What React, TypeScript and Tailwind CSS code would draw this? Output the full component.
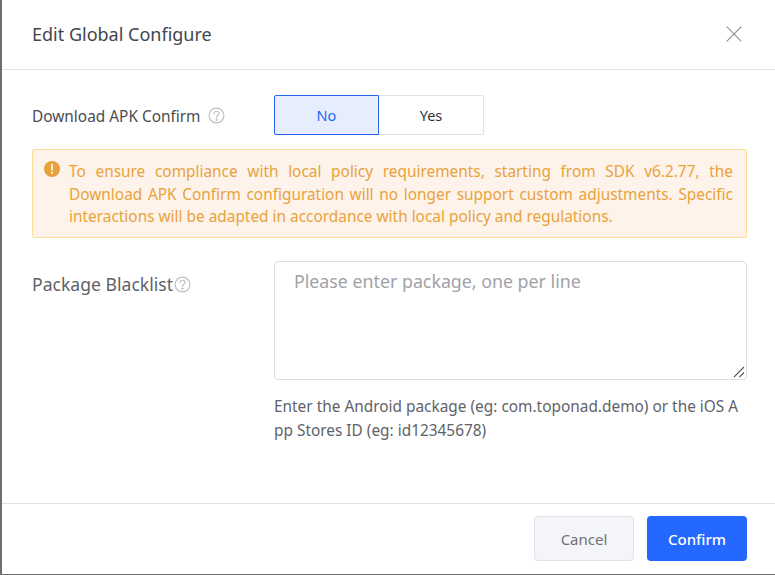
const font = { fontFamily: '"Noto Sans", sans-serif' };

function HelpIcon({ className }: { className: string }) {
  return (
    <svg viewBox="0 0 18 18" className={className} fill="none" stroke="#bfc1c7" strokeWidth="1.3">
      <circle cx="9" cy="9" r="7.8" />
      <path d="M6.3 7.1c0-1.6 1.1-2.6 2.7-2.6 1.5 0 2.7.9 2.7 2.3 0 1.1-.7 1.7-1.5 2.2-.7.5-1.2 1-1.2 1.9" strokeLinecap="round" />
      <circle cx="9" cy="13.4" r="0.6" fill="#bfc1c7" />
    </svg>
  );
}

export default function App() {
  return (
    <div className="h-[575px] w-[775px] bg-[#6f6f6f] pl-[2px] pb-[1px] overflow-hidden" style={font}>
      <div className="flex h-full flex-col bg-white">
        {/* header */}
        <div className="flex h-[70px] shrink-0 items-center justify-between border-b border-[#e0e0e6] pl-[30px] pr-[33px]">
          <h1 className="text-[18px] text-[#44464d]">Edit Global Configure</h1>
          <svg viewBox="0 0 16 16" className="mb-[2px] h-4 w-4" stroke="#909299" strokeWidth="1.2">
            <path d="M.7.7l14.6 14.6M15.3.7L.7 15.3" />
          </svg>
        </div>

        {/* body */}
        <div className="flex-1 pl-[30px] pr-[28px]">
          <div className="mt-[25px] flex h-[40px] items-center">
            <div className="flex w-[242px] items-center">
              <span className="pt-[3px] text-[15.4px] text-[#4a4c53]">Download APK Confirm</span>
              <HelpIcon className="ml-[8px] mt-[2px] h-[17px] w-[17px]" />
            </div>
            <div className="flex h-[40px] text-[14.5px]">
              <div className="flex w-[105px] items-center justify-center rounded-l-[2px] border border-[#2468f2] bg-[#e6edfd] pt-[1px] text-[#2468f2]">No</div>
              <div className="flex w-[105px] items-center justify-center rounded-r-[2px] border border-l-0 border-[#e0e0e6] pt-[1px] text-[#303238]">Yes</div>
            </div>
          </div>

          <div className="mt-[14px] flex h-[89px] rounded-[2px] border border-[#fbdf95] bg-[#fdf3ea] pl-[11px] pr-[13px] pt-[11px]">
            <svg viewBox="0 0 16 16" className="h-[16px] w-[16px] shrink-0">
              <circle cx="8" cy="8" r="8" fill="#e9a23b" />
              <path d="M8 3.6v5.4" stroke="#fff" strokeWidth="1.6" strokeLinecap="round" />
              <circle cx="8" cy="11.8" r="1" fill="#fff" />
            </svg>
            <p className="ml-[9px] text-justify text-[15.4px] leading-[22.5px] text-[#e9a23b]">
              To ensure compliance with local policy requirements, starting from SDK v6.2.77, the Download APK Confirm configuration will no longer support custom adjustments. Specific interactions will be adapted in accordance with local policy and regulations.
            </p>
          </div>

          <div className="mt-[23px] flex">
            <div className="flex h-[46px] w-[242px] items-center">
              <span className="text-[17.6px] text-[#5f6269]">Package Blacklist</span>
              <HelpIcon className="ml-[1px] h-[17px] w-[17px]" />
            </div>
            <div className="flex-1">
              <div className="relative">
                <textarea
                  readOnly
                  placeholder="Please enter package, one per line"
                  className="block h-[119px] w-full resize-none rounded-[4px] border border-[#dcdde2] px-[19px] py-[6px] text-[17.8px] leading-[26px] outline-none placeholder:text-[#a0a2a8]"
                />
                <svg viewBox="0 0 12 12" className="absolute bottom-[2px] right-[2px] h-3 w-3" stroke="#55575d" strokeWidth="1.1">
                  <path d="M1 11L11 1M6.5 11L11 6.5" />
                </svg>
              </div>
              <p className="mt-[15px] break-all text-[15.4px] leading-[24px] text-[#5f6269]">
                Enter the Android package (eg: com.toponad.demo) or the iOS App Stores ID (eg: id12345678)
              </p>
            </div>
          </div>
        </div>

        {/* footer */}
        <div className="flex h-[71px] shrink-0 items-start justify-end gap-[13px] border-t border-[#e0e0e6] pr-[28px] pt-[12px]">
          <button className="h-[45px] w-[100px] rounded-[4px] border border-[#e0e0e6] bg-[#f4f5f9] pt-[1px] text-[15px] text-[#6f7178]">Cancel</button>
          <button className="h-[45px] w-[100px] rounded-[4px] bg-[#2468ff] pt-[1px] text-[15px] font-medium text-white">Confirm</button>
        </div>
      </div>
    </div>
  );
}
